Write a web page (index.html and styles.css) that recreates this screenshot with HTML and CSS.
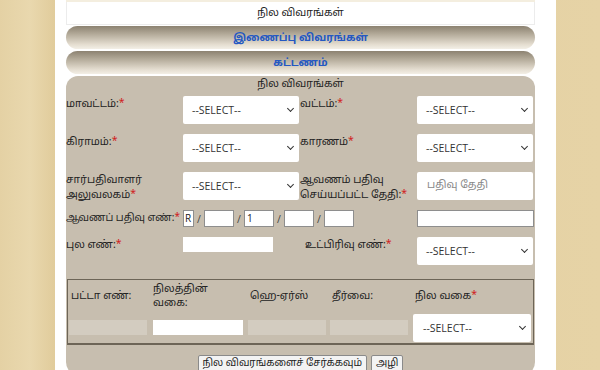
FILE: index.html
```html
<!DOCTYPE html>
<html lang="ta">
<head>
<meta charset="utf-8">
<title>நில விவரங்கள்</title>
<link rel="stylesheet" href="styles.css">
</head>
<body>
<div class="sheet">
  <div class="prev"></div>
  <div class="topbox">நில விவரங்கள்</div>
  <div class="acc">இணைப்பு விவரங்கள்</div>
  <div class="acc">கட்டணம்</div>
  <div class="panel">
    <div class="ptitle">நில விவரங்கள்</div>
    <div class="grid">
      <div class="lbl">மாவட்டம்:<span class="req">*</span></div>
      <div class="ctl"><div class="sel"><span>--SELECT--</span><i class="chev"></i></div></div>
      <div class="lbl">வட்டம்:<span class="req">*</span></div>
      <div class="ctl"><div class="sel"><span>--SELECT--</span><i class="chev"></i></div></div>

      <div class="lbl">கிராமம்:<span class="req">*</span></div>
      <div class="ctl"><div class="sel"><span>--SELECT--</span><i class="chev"></i></div></div>
      <div class="lbl">காரணம்<span class="req">*</span></div>
      <div class="ctl"><div class="sel"><span>--SELECT--</span><i class="chev"></i></div></div>

      <div class="lbl">சார்பதிவாளர்<br>அலுவலகம்<span class="req">*</span></div>
      <div class="ctl"><div class="sel"><span>--SELECT--</span><i class="chev"></i></div></div>
      <div class="lbl">ஆவணம் பதிவு<br>செய்யப்பட்ட தேதி:<span class="req">*</span></div>
      <div class="ctl"><div class="txt ph">பதிவு தேதி</div></div>

      <div class="lbl nw">ஆவணப் பதிவு எண்:<span class="req">*</span></div>
      <div class="ctl wide">
        <div class="docno">
          <span class="box r">R</span><span class="sl">/</span>
          <span class="box"></span><span class="sl">/</span>
          <span class="box">1</span><span class="sl">/</span>
          <span class="box"></span><span class="sl">/</span>
          <span class="box"></span>
        </div>
      </div>
      <div class="ctl"><div class="small full"></div></div>

      <div class="lbl">புல எண்:<span class="req">*</span></div>
      <div class="ctl"><div class="small pula"></div></div>
      <div class="lbl sub">உட்பிரிவு எண்:<span class="req">*</span></div>
      <div class="ctl"><div class="sel"><span>--SELECT--</span><i class="chev"></i></div></div>
    </div>

    <div class="fset">
      <div class="fh">பட்டா எண்:</div>
      <div class="fh two">நிலத்தின்<br>வகை:</div>
      <div class="fh">ஹெ-ஏர்ஸ்</div>
      <div class="fh">தீர்வை:</div>
      <div class="fh">நில வகை<span class="req">*</span></div>

      <div class="fc"><div class="dis w78"></div></div>
      <div class="fc"><div class="wht"></div></div>
      <div class="fc"><div class="dis w78"></div></div>
      <div class="fc"><div class="dis w78"></div></div>
      <div class="fc"><div class="sel fsel"><span>--SELECT--</span><i class="chev"></i></div></div>
    </div>

    <div class="btns">
      <button class="btn">நில விவரங்களைச் சேர்க்கவும்</button>
      <button class="btn">அழி</button>
    </div>
  </div>
</div>
</body>
</html>
```

FILE: styles.css
```css
html, body {
  margin: 0;
  padding: 0;
}
body {
  width: 600px;
  height: 370px;
  overflow: hidden;
  background: linear-gradient(90deg, #e4d1a4 0%, #e9d8ae 5%, #e1cc9c 9%, #e6d3a6 100%);
  font-family: "Noto Sans Tamil", "Latha", "Noto Sans", "DejaVu Sans", sans-serif;
  font-size: 10.5px;
  color: #222;
}
.sheet {
  margin-left: 55px;
  width: 469px;
  padding: 0 21px 0 11px;
  background: #fff;
  height: 370px;
}
.prev {
  height: 2px;
  background: #f4eedf;
}
.topbox {
  height: 23px;
  line-height: 24px;
  text-align: center;
  border: 1px solid #ececec;
  border-top: none;
  box-sizing: border-box;
  margin-bottom: 1px;
  color: #222;
}
.acc {
  height: 23px;
  line-height: 26px;
  margin-bottom: 2px;
  border-radius: 12px;
  background: linear-gradient(180deg, #8c8271 0%, #b3aa99 35%, #e4ddd0 80%, #f3efe6 100%);
  text-align: center;
  color: #2458c2;
  font-weight: bold;
}
.panel {
  background: #c7beaf;
  border-radius: 12px 12px 14px 14px;
  height: 300px;
  box-sizing: border-box;
}
.ptitle {
  text-align: center;
  height: 18px;
  line-height: 17px;
  color: #222;
}
.grid {
  display: grid;
  grid-template-columns: 117px 117px 117px 117px;
  grid-template-rows: 28px 28px 28px 17px 28px;
  row-gap: 10px;
  padding-top: 2px;
}
.lbl {
  padding-top: 1px;
  line-height: 15px;
  color: #222;
}
.lbl.nw {
  white-space: nowrap;
  font-size: 10px;
}
.lbl.sub {
  padding-left: 5px;
}
.req {
  color: #d02020;
}
.ctl.wide {
  grid-column: span 2;
}
.sel {
  width: 116px;
  height: 28px;
  background: #fff;
  box-sizing: border-box;
  border-radius: 2px;
  display: flex;
  align-items: center;
  justify-content: space-between;
  padding: 0 6px 0 9px;
  font-family: "Open Sans", "Noto Sans", sans-serif;
  font-size: 10.5px;
  color: #333;
}
.chev {
  width: 4px;
  height: 4px;
  border-right: 1.5px solid #333;
  border-bottom: 1.5px solid #333;
  transform: rotate(45deg);
  margin-top: -3px;
}
.txt {
  width: 116px;
  height: 28px;
  background: #fff;
  box-sizing: border-box;
  border-radius: 2px;
  padding: 0 10px;
  line-height: 28px;
}
.ph {
  color: #888;
}
.docno {
  display: flex;
  align-items: center;
  height: 17px;
}
.box {
  display: inline-block;
  width: 30px;
  height: 17px;
  background: #fff;
  border: 1px solid #8e8e8e;
  box-sizing: border-box;
  font-family: "Open Sans", "Noto Sans", sans-serif;
  font-size: 10px;
  line-height: 15px;
  padding-left: 2px;
  color: #222;
}
.box.r {
  width: 11px;
  padding-left: 1px;
}
.sl {
  width: 10px;
  text-align: center;
  color: #444;
  font-family: "Open Sans", sans-serif;
}
.small {
  height: 17px;
  background: #fff;
  box-sizing: border-box;
  border: 1px solid #b8b8b8;
}
.small.full {
  width: 117px;
  border-color: #8e8e8e;
}
.small.pula {
  width: 90px;
  height: 15px;
  border: none;
}
.fset {
  margin: 14px 1px 0 1px;
  border: 1px solid #6d6557;
  border-bottom: 2px solid #6d6557;
  height: 66px;
  box-sizing: border-box;
  display: grid;
  grid-template-columns: 84px 95px 82px 83px 1fr;
  grid-template-rows: 33px 29px;
  padding-left: 1px;
}
.fh {
  display: flex;
  align-items: center;
  padding-left: 2px;
  line-height: 14px;
  color: #222;
}
.fh.two {
  padding-left: 0;
}
.fc {
  display: flex;
  align-items: center;
}
.dis {
  height: 15px;
  background: #d3ccc0;
}
.w78 {
  width: 78px;
}
.wht {
  width: 90px;
  height: 15px;
  background: #fff;
}
.fsel {
  width: 118px;
  height: 28px;
  padding-left: 10px;
}
.btns {
  display: flex;
  justify-content: center;
  gap: 4px;
  margin-top: 10px;
}
.btn {
  font-family: inherit;
  font-size: 10px;
  background: #f3f3f3;
  border: 1px solid #8a8a8a;
  border-radius: 2px;
  padding: 0 4px;
  height: 18px;
  line-height: 16px;
  color: #222;
}
```
